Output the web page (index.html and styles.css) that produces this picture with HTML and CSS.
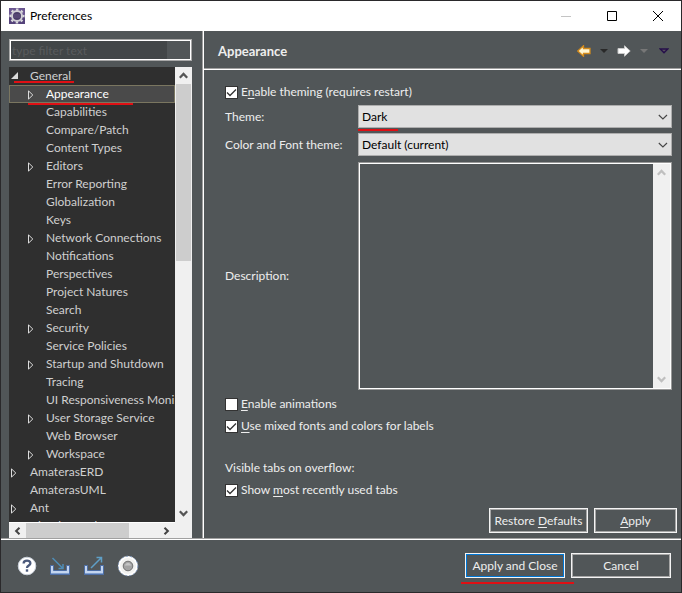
FILE: index.html
```html
<!DOCTYPE html>
<html lang="en">
<head>
<meta charset="utf-8">
<title>Preferences</title>
<link rel="stylesheet" href="styles.css">
</head>
<body>
<svg class="defs" aria-hidden="true">
  <symbol id="chev-up" viewBox="0 0 8 6"><path d="M0.7 5 4 1.6 7.3 5" fill="none" stroke="currentColor" stroke-width="2"/></symbol>
  <symbol id="chev-down" viewBox="0 0 8 6"><path d="M0.7 1 4 4.4 7.3 1" fill="none" stroke="currentColor" stroke-width="2"/></symbol>
  <symbol id="chev-left" viewBox="0 0 6 8"><path d="M5 0.7 1.6 4 5 7.3" fill="none" stroke="currentColor" stroke-width="2"/></symbol>
  <symbol id="chev-right" viewBox="0 0 6 8"><path d="M1 0.7 4.4 4 1 7.3" fill="none" stroke="currentColor" stroke-width="2"/></symbol>
  <symbol id="arrow" viewBox="0 0 10 6"><path d="M0.8 1 4.9 5 9 1" fill="none" stroke="#444" stroke-width="1.1"/></symbol>
  <symbol id="tick" viewBox="0 0 13 13"><path d="M2 6.5 5 9.5 11 3.5" fill="none" stroke="#333" stroke-width="1.3"/></symbol>
  <symbol id="twisty" viewBox="0 0 6 10"><path d="M0.5 0.9V9.1L4.8 5Z" fill="none" stroke="#dcdcdc"/></symbol>
  <symbol id="caret" viewBox="0 0 8 4"><path d="M0 0H8L4 4Z" fill="currentColor"/></symbol>
</svg>
<div class="window">
  <header class="titlebar">
    <svg class="app-icon" viewBox="0 0 16 16" aria-hidden="true">
      <rect width="16" height="16" fill="#6a5590"/>
      <path d="M0 8H16V16H0Z" fill="#54427a"/>
      <circle cx="8" cy="8" r="6.600" fill="none" stroke="#d9d9dc" stroke-width="2" stroke-dasharray="2.500 2.680" stroke-dashoffset="1.250"/>
      <circle cx="8" cy="8" r="5" fill="#4a3d68" stroke="#d2d0d6" stroke-width="2"/>
      <path d="M4.500 7H11.500M4.500 9H11.500" stroke="#625280"/>
    </svg>
    <h1 class="title">Preferences</h1>
    <button class="caption" aria-label="Minimize" disabled><svg viewBox="0 0 12 12"><path d="M1 6.500H11" stroke="#c4c4c4"/></svg></button>
    <button class="caption" aria-label="Maximize"><svg viewBox="0 0 12 12"><path d="M1.500 1.500H10.500V10.500H1.500Z" fill="none" stroke="#000"/></svg></button>
    <button class="caption" aria-label="Close"><svg viewBox="0 0 12 12"><path d="M1 1 11 11M11 1 1 11" stroke="#000"/></svg></button>
  </header>
  <main class="main">
    <nav class="sidebar">
      <input class="filter" type="text" placeholder="type filter text" aria-label="Filter">
      <div class="tree-box">
        <ul class="tree">
          <li class="root"><button class="twisty" aria-label="Collapse"><svg class="open" viewBox="0 0 7 7"><path d="M7 0V7H0Z" fill="#dcdcdc"/></svg></button><span class="marked general">General</span></li>
          <li class="selected"><button class="twisty" aria-label="Expand"><svg><use href="#twisty"/></svg></button><span class="marked appearance">Appearance</span></li>
          <li>Capabilities</li>
          <li>Compare/Patch</li>
          <li>Content Types</li>
          <li><button class="twisty" aria-label="Expand"><svg><use href="#twisty"/></svg></button>Editors</li>
          <li>Error Reporting</li>
          <li>Globalization</li>
          <li>Keys</li>
          <li><button class="twisty" aria-label="Expand"><svg><use href="#twisty"/></svg></button>Network Connections</li>
          <li>Notifications</li>
          <li>Perspectives</li>
          <li>Project Natures</li>
          <li>Search</li>
          <li><button class="twisty" aria-label="Expand"><svg><use href="#twisty"/></svg></button>Security</li>
          <li>Service Policies</li>
          <li><button class="twisty" aria-label="Expand"><svg><use href="#twisty"/></svg></button>Startup and Shutdown</li>
          <li>Tracing</li>
          <li>UI Responsiveness Moni</li>
          <li><button class="twisty" aria-label="Expand"><svg><use href="#twisty"/></svg></button>User Storage Service</li>
          <li>Web Browser</li>
          <li><button class="twisty" aria-label="Expand"><svg><use href="#twisty"/></svg></button>Workspace</li>
          <li class="root"><button class="twisty" aria-label="Expand"><svg><use href="#twisty"/></svg></button>AmaterasERD</li>
          <li class="root">AmaterasUML</li>
          <li class="root"><button class="twisty" aria-label="Expand"><svg><use href="#twisty"/></svg></button>Ant</li>
          <li class="root">Cloud Foundry</li>
        </ul>
        <div class="vbar">
          <svg class="v"><use href="#chev-up"/></svg>
          <div class="vtrack"><div class="vthumb"></div></div>
          <svg class="v"><use href="#chev-down"/></svg>
        </div>
        <div class="hbar">
          <svg class="h"><use href="#chev-left"/></svg>
          <div class="htrack"><div class="hthumb"></div></div>
          <svg class="h"><use href="#chev-right"/></svg>
        </div>
      </div>
    </nav>
    <section class="page">
      <div class="page-head">
        <h2>Appearance</h2>
        <button class="tool" aria-label="Back"><svg class="nav" viewBox="0 0 14 12"><path d="M0.800 6 6.500 0.800V3.500H13V8.500H6.500V11.200Z" fill="#fff6d2" stroke="#d38b1c" stroke-width="1.300"/></svg></button>
        <button class="tool c-dark" aria-label="Back history"><svg class="car"><use href="#caret"/></svg></button>
        <button class="tool" aria-label="Forward"><svg class="nav" viewBox="0 0 14 12"><path d="M13.200 6 7.500 0.800V3.500H1V8.500H7.500V11.200Z" fill="#fff" stroke="#c8c8c8"/></svg></button>
        <button class="tool c-gray" aria-label="Forward history"><svg class="car"><use href="#caret"/></svg></button>
        <button class="tool c-menu" aria-label="Menu"><svg class="menu" viewBox="0 0 10 6"><path d="M1.200 1H8.800L5 4.800Z" fill="#59515e" stroke="#26104a" stroke-width="1.500"/></svg></button>
      </div>
      <form class="form">
        <label class="check"><span class="tickbox"><input type="checkbox" checked><svg><use href="#tick"/></svg></span><span>E<u>n</u>able theming (requires restart)</span></label>
        <div class="fields">
          <label for="theme">Theme:</label>
          <div class="combo marked dark"><select id="theme"><option>Dark</option></select><svg><use href="#arrow"/></svg></div>
          <label for="colors">Color and Font theme:</label>
          <div class="combo"><select id="colors"><option>Default (current)</option></select><svg><use href="#arrow"/></svg></div>
          <label for="desc">Description:</label>
          <div class="desc">
            <textarea id="desc" readonly></textarea>
            <div class="descbar"><svg class="v"><use href="#chev-up"/></svg><svg class="v"><use href="#chev-down"/></svg></div>
          </div>
        </div>
        <label class="check"><span class="tickbox"><input type="checkbox"><svg><use href="#tick"/></svg></span><span><u>E</u>nable animations</span></label>
        <label class="check"><span class="tickbox"><input type="checkbox" checked><svg><use href="#tick"/></svg></span><span><u>U</u>se mixed fonts and colors for labels</span></label>
        <p class="group">Visible tabs on overflow:</p>
        <label class="check"><span class="tickbox"><input type="checkbox" checked><svg><use href="#tick"/></svg></span><span>Show <u>m</u>ost recently used tabs</span></label>
      </form>
      <div class="actions">
        <button class="btn restore">Restore <u>D</u>efaults</button>
        <button class="btn narrow"><u>A</u>pply</button>
      </div>
    </section>
  </main>
  <footer class="footer">
    <button class="tool" aria-label="Help"><svg class="ico" viewBox="0 0 20 20"><circle cx="10" cy="10" r="8.800" fill="#fff" stroke="#c9d0da"/><path d="M6.600 7.500C6.600 3.700 13.400 3.700 13.400 7.300 13.400 9.600 10 9.500 10 12" fill="none" stroke="#4b5a7c" stroke-width="2.300"/><rect x="8.800" y="13.300" width="2.400" height="2.400" fill="#4b5a7c"/></svg></button>
    <button class="tool" aria-label="Import"><svg class="tray" viewBox="0 0 22 20"><path d="M1.500 9.500H4.500V14.500H17.500V9.500H20.500V18.500H1.500Z" fill="#c3d5f0" stroke="#4d6ea6"/><path d="M2 17.500H20" stroke="#7f9fd0" stroke-width="1"/><path d="M3.500 2 13.500 12M14 8V12.500H9.500" fill="none" stroke="#4f8cb6" stroke-width="1.500"/></svg></button>
    <button class="tool" aria-label="Export"><svg class="tray" viewBox="0 0 22 20"><path d="M1.500 9.500H4.500V14.500H17.500V9.500H20.500V18.500H1.500Z" fill="#c3d5f0" stroke="#4d6ea6"/><path d="M2 17.500H20" stroke="#7f9fd0" stroke-width="1"/><path d="M8 12 18 2M13.500 1.500H18.500V6.500" fill="none" stroke="#5f9fc6" stroke-width="1.500"/></svg></button>
    <button class="tool" aria-label="Record"><svg class="rec" viewBox="0 0 22 22"><circle cx="11" cy="11" r="9" fill="#f2f2f0" stroke="#fff" stroke-width="2"/><circle cx="11" cy="11" r="9.800" fill="none" stroke="#7f97bb" stroke-dasharray="2 2"/><circle cx="11" cy="11" r="4.800" fill="#a2a2a2" stroke="#707070"/><path d="M7.500 10.500Q11 5 14.500 10.500Z" fill="#c5c5c5"/></svg></button>
    <span class="spacer"></span>
    <button class="btn primary marked close">Apply and Close</button>
    <button class="btn">Cancel</button>
  </footer>
</div>
</body>
</html>
```
FILE: styles.css
```css
* { box-sizing: border-box; }
html, body { height: 100%; margin: 0; }
body { font: 12px/18px Lato, "Noto Sans", sans-serif; color: #eee; background: #515658; }
button { font: inherit; color: inherit; background: none; border: 0; padding: 0; }
h1, h2, p, ul { margin: 0; padding: 0; font-size: inherit; }
svg { display: block; }
.defs { display: none; }
.window { display: flex; flex-direction: column; min-height: 100%; border: 1px solid #2a292b; background: #515658; }

.titlebar { display: flex; align-items: center; height: 30px; background: #fff; color: #000; padding-left: 8px; }
.app-icon { width: 16px; height: 16px; }
.title { flex: 1; font-weight: 400; margin-left: 5px; }
.caption { width: 46px; height: 30px; display: grid; place-items: center; }
.caption svg { width: 12px; height: 12px; }

.main { flex: 1; display: flex; border-bottom: 1px solid #fff; box-shadow: inset 0 -1px #a0a0a0; padding-bottom: 1px; }
.sidebar { flex: 0 0 203px; display: flex; flex-direction: column; padding: 8px 11px 0 8px; border-right: 1px solid #fff; box-shadow: inset -1px 0 #a0a0a0; }
.filter { height: 22px; width: 100%; padding: 0 24px 0 2px; font: inherit; color: #ccc; border: 1px solid #a8a8a8; box-shadow: inset 0 0 0 1px #fff; outline: 0;
  background: linear-gradient(#424648, #424648) 0 0 / calc(100% - 24px) 100% no-repeat #515658; }
.filter::placeholder { color: #595b5d; opacity: 1; }
.tree-box { flex: 1; margin-top: 6px; display: grid; grid-template: minmax(0, 1fr) 16px / minmax(0, 1fr) 17px; background: #f0f0f0; }
.tree { height: 455px; min-height: 100%; overflow: hidden; list-style: none; background: #2f2f2f; color: #d0d0d0; white-space: nowrap; }
.tree li { display: flex; height: 18px; padding-left: 37px; }
.tree .root { padding-left: 21px; }
.tree .selected { background: #4a4a4a; color: #fff; outline: 1px solid #7a7660; outline-offset: -1px; }
.twisty { width: 18px; margin-left: -18px; display: flex; align-items: center; padding-top: 2px; }
.root .twisty { margin-left: -19px; width: 19px; }
.twisty svg { width: 6px; height: 10px; }
.twisty svg.open { width: 7px; height: 7px; margin-bottom: 3px; }
.vbar, .descbar { display: flex; flex-direction: column; align-items: center; background: #f0f0f0; color: #555; }
.v { width: 9px; height: 7px; margin: 5px 0; flex: none; }
.vtrack { flex: 1; width: 15px; }
.vthumb { height: 42%; background: #cdcdcd; }
.hbar { display: flex; align-items: center; color: #444; border-top: 1px solid #fff; }
.h { width: 7px; height: 8px; margin: 0 5px; flex: none; }
.htrack { flex: 1; height: 100%; }
.hthumb { width: 78%; height: 100%; background: #cdcdcd; }

.page { flex: 1; min-width: 0; display: flex; flex-direction: column; }
.page-head { display: flex; align-items: center; height: 39px; padding: 1px 12px 0 14px; border-bottom: 1px solid #fff; box-shadow: inset 0 -1px #a0a0a0; }
.page-head h2 { flex: 1; font-size: 13px; }
.tool { display: grid; place-items: center; }
.nav { width: 14px; height: 12px; }
.car { width: 8px; height: 4px; margin: 0 9px; }
.menu { width: 10px; height: 6px; margin-left: 2px; }
.c-dark { color: #292929; }
.c-gray { color: #777; }
.form { padding: 11px 9px 0 21px; display: flex; flex-direction: column; }
.check { display: flex; align-items: center; gap: 3px; height: 22px; align-self: flex-start; }
.tickbox { display: grid; width: 13px; height: 13px; }
.tickbox > * { grid-area: 1 / 1; width: 13px; height: 13px; margin: 0; }
.tickbox input { appearance: none; background: #fff; border: 1px solid #333; }
.tickbox svg { pointer-events: none; visibility: hidden; }
.tickbox input:checked + svg { visibility: visible; }
u { text-underline-offset: 2px; }
.fields { display: grid; grid-template-columns: 133px minmax(0, 1fr); row-gap: 5px; margin: 2px 0 3px; align-items: center; }
.combo { display: grid; align-items: center; height: 23px; }
.combo > * { grid-area: 1 / 1; }
.combo select { appearance: none; width: 100%; height: 23px; padding: 0 3px; font: inherit; color: #000; background: #e1e1e1; border: 1px solid #adadad; border-radius: 0; }
.combo svg { width: 10px; height: 6px; margin-right: 4px; justify-self: end; pointer-events: none; }
.desc { display: flex; height: 228px; border: 1px solid #999; margin-top: 1px; padding: 1px; box-shadow: inset 0 0 0 1px #fff; }
.desc textarea { flex: 1; min-width: 0; resize: none; border: 0; padding: 2px; background: #515658; color: inherit; font: inherit; outline: 0; }
.descbar { width: 17px; justify-content: space-between; color: #bfbfbf; }
.group { margin-top: 22px; height: 20px; }
.actions { display: flex; justify-content: flex-end; gap: 6px; margin-top: auto; padding: 0 4px 5px 0; }
.btn { width: 100px; height: 25px; border: 1px solid #f4f4f4; box-shadow: inset 0 0 0 1px #a6a6a6; white-space: nowrap; }
.btn.narrow { width: 83px; }
.btn.restore { width: 99px; }
.btn.primary { box-shadow: inset 0 0 0 1px #0078d7; }

.footer { display: flex; align-items: center; height: 52px; padding: 0 10px 1px 16px; gap: 12px; }
.ico { width: 20px; height: 20px; }
.tray { width: 22px; height: 20px; }
.rec { width: 22px; height: 22px; }
.spacer { flex: 1; }
.footer .btn + .btn { margin-left: -6px; }

.marked { position: relative; }
.marked::after { content: ""; position: absolute; height: 2px; background: #e00f14; z-index: 1; }
.general::after { left: -16px; right: -3px; top: 14px; }
.appearance::after { left: -18px; right: -24px; top: 18px; }
.dark::after { left: 0; width: 40px; top: 24px; }
.close::after { left: -5px; right: -10px; top: 28px; }
```
